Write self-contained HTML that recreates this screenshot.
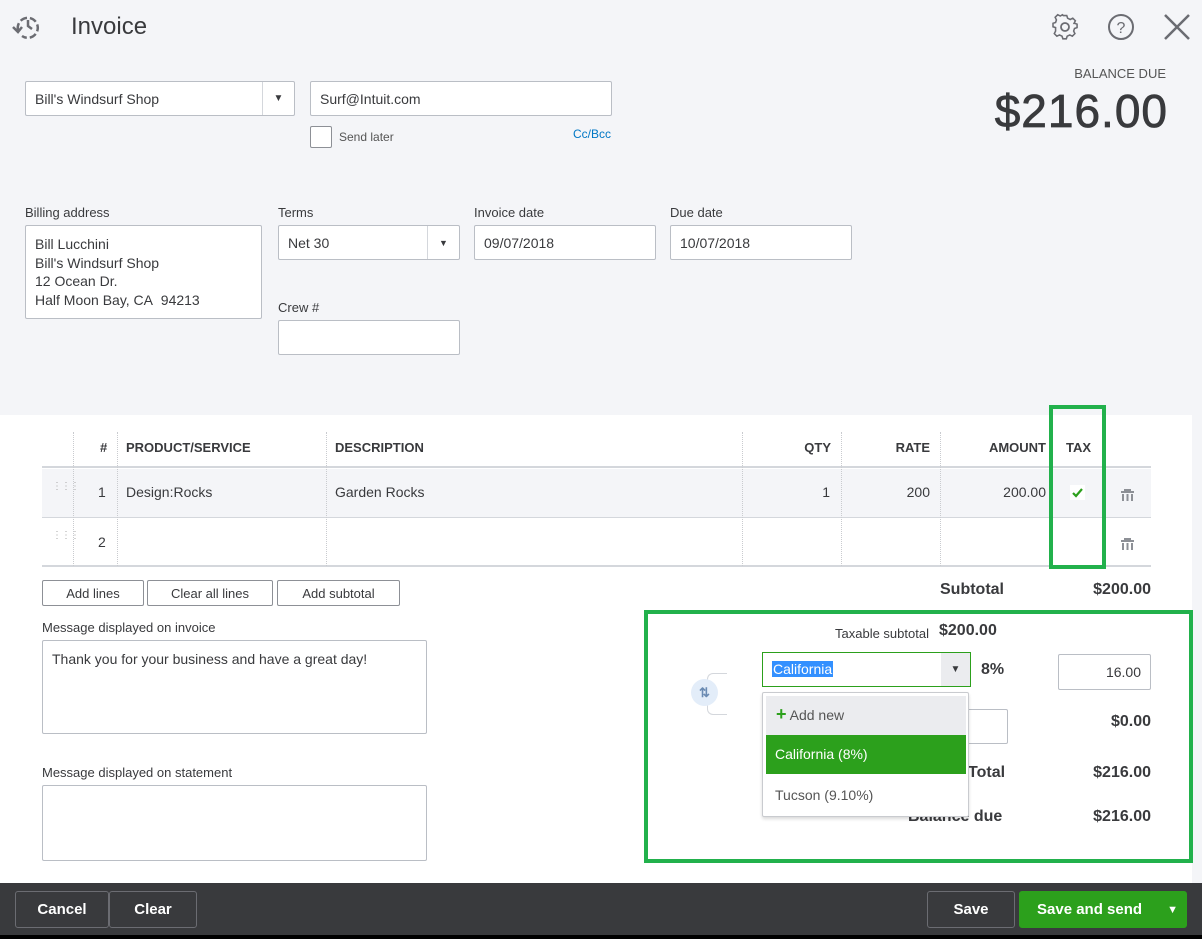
<!DOCTYPE html>
<html><head><meta charset="utf-8"><style>
*{box-sizing:border-box;margin:0;padding:0}
body{width:1202px;height:939px;background:#f4f5f8;font-family:"Liberation Sans",sans-serif;color:#393a3d;position:relative;overflow:hidden;font-size:14px}
.a{position:absolute}
.inp{position:absolute;background:#fff;border:1px solid #babec5;border-radius:2px;font-size:14px;padding-left:9px;display:flex;align-items:center}
.lbl{position:absolute;font-size:13px;color:#393a3d}
.dd{position:absolute;right:0;top:0;bottom:0;width:32px;border-left:1px solid #d4d7dc;display:flex;align-items:center;justify-content:center;font-size:10px}
.th{position:absolute;top:440px;font-size:13px;font-weight:bold;color:#393a3d}
.vl{position:absolute;width:0;border-left:1px dotted #c9cbcf}
.btn{position:absolute;border:1px solid #8d9096;border-radius:2px;background:#fff;font-size:13px;display:flex;align-items:center;justify-content:center}
.fb{position:absolute;top:891px;height:37px;border:1px solid #6b6c72;border-radius:3px;color:#fff;font-weight:bold;font-size:15px;display:flex;align-items:center;justify-content:center}
.r{text-align:right}
</style></head><body>
<svg class="a" style="left:11px;top:12px" width="32" height="28" viewBox="0 0 32 28"><path d="M7 18a10 10 0 1 1 4 6" fill="none" stroke="#6b6c72" stroke-width="2.5" stroke-dasharray="7 3"/><path d="M17 8v6l4 3" fill="none" stroke="#6b6c72" stroke-width="2.5"/><path d="M2 15l5 5 4-5" fill="none" stroke="#6b6c72" stroke-width="2.5"/></svg>
<div class="a" style="left:71px;top:13px;font-size:24px;color:#393a3d">Invoice</div>
<svg class="a" style="left:1051px;top:13px" width="28" height="28" viewBox="0 0 28 28"><circle cx="14" cy="14" r="4" fill="none" stroke="#6b6c72" stroke-width="1.8"/><path d="M12 3h4l1 3 3 1.5 3-1.5 3 3-1.5 3L25 12l3 1v4l-3 1-1 3 1.5 3-3 3-3-1.5-3 1.5-1 3h-4l-1-3-3-1.5-3 1.5-3-3 1.5-3L3 17l-3-1v-4l3-1 1-3L2.5 5 5.5 2 8.5 3.5 11 2z" transform="translate(2 0) scale(.86)" fill="none" stroke="#6b6c72" stroke-width="1.8"/></svg>
<svg class="a" style="left:1107px;top:13px" width="28" height="28" viewBox="0 0 28 28"><circle cx="14" cy="14" r="12" fill="none" stroke="#6b6c72" stroke-width="2"/><text x="14" y="20" text-anchor="middle" font-size="16" font-family="Liberation Sans" fill="#6b6c72">?</text></svg>
<svg class="a" style="left:1163px;top:13px" width="28" height="28" viewBox="0 0 28 28"><path d="M2 2l24 24M26 2L2 26" stroke="#6b6c72" stroke-width="2.5"/></svg>
<div class="a" style="right:36px;top:66px;font-size:13px;color:#555">BALANCE DUE</div>
<div class="a" style="right:34px;top:84px;font-size:46px;color:#393a3d;letter-spacing:1px;-webkit-text-stroke:0.8px #393a3d">$216.00</div>

<div class="inp" style="left:25px;top:81px;width:270px;height:35px">Bill's Windsurf Shop<div class="dd">▼</div></div>
<div class="inp" style="left:310px;top:81px;width:302px;height:35px">Surf@Intuit.com</div>
<div class="a" style="left:310px;top:126px;width:22px;height:22px;border:1px solid #8d9096;border-radius:2px;background:#fff"></div>
<div class="a" style="left:339px;top:130px;font-size:12px;color:#555">Send later</div>
<div class="a" style="left:573px;top:127px;font-size:12px;color:#0077c5">Cc/Bcc</div>

<div class="lbl" style="left:25px;top:205px">Billing address</div>
<div class="inp" style="left:25px;top:225px;width:237px;height:94px;align-items:flex-start;padding-top:9px;line-height:18.5px;font-size:14px">Bill Lucchini<br>Bill's Windsurf Shop<br>12 Ocean Dr.<br>Half Moon Bay, CA&nbsp; 94213</div>
<div class="lbl" style="left:278px;top:205px">Terms</div>
<div class="inp" style="left:278px;top:225px;width:182px;height:35px">Net 30<div class="dd" style="font-size:9px">▼</div></div>
<div class="lbl" style="left:474px;top:205px">Invoice date</div>
<div class="inp" style="left:474px;top:225px;width:182px;height:35px">09/07/2018</div>
<div class="lbl" style="left:670px;top:205px">Due date</div>
<div class="inp" style="left:670px;top:225px;width:182px;height:35px">10/07/2018</div>
<div class="lbl" style="left:278px;top:300px">Crew #</div>
<div class="inp" style="left:278px;top:320px;width:182px;height:35px"></div>

<div class="a" style="left:0;top:415px;width:1192px;height:468px;background:#fff"></div>
<div class="a" style="left:42px;top:469px;width:1109px;height:48px;background:#f4f5f8"></div>
<div class="a" style="left:42px;top:466px;width:1109px;height:2px;background:#d4d7dc"></div>
<div class="a" style="left:42px;top:517px;width:1109px;height:1px;background:#d4d7dc"></div>
<div class="a" style="left:42px;top:565px;width:1109px;height:2px;background:#d4d7dc"></div>
<div class="vl" style="left:73px;top:432px;height:134px"></div>
<div class="vl" style="left:117px;top:432px;height:134px"></div>
<div class="vl" style="left:326px;top:432px;height:134px"></div>
<div class="vl" style="left:742px;top:432px;height:134px"></div>
<div class="vl" style="left:841px;top:432px;height:134px"></div>
<div class="vl" style="left:940px;top:432px;height:134px"></div>
<div class="th" style="left:100px">#</div>
<div class="th" style="left:126px">PRODUCT/SERVICE</div>
<div class="th" style="left:335px">DESCRIPTION</div>
<div class="th" style="left:790px;width:41px;text-align:right">QTY</div>
<div class="th" style="left:880px;width:50px;text-align:right">RATE</div>
<div class="th" style="left:960px;width:86px;text-align:right">AMOUNT</div>
<div class="th" style="left:1066px">TAX</div>
<div class="a" style="left:52px;top:481px;font-size:10px;color:#aaa;letter-spacing:-1px">⋮⋮⋮</div>
<div class="a" style="left:52px;top:530px;font-size:10px;color:#aaa;letter-spacing:-1px">⋮⋮⋮</div>
<div class="a" style="left:98px;top:484px">1</div>
<div class="a" style="left:98px;top:534px">2</div>
<div class="a" style="left:126px;top:484px">Design:Rocks</div>
<div class="a" style="left:335px;top:484px">Garden Rocks</div>
<div class="a r" style="left:780px;top:484px;width:50px">1</div>
<div class="a r" style="left:870px;top:484px;width:60px">200</div>
<div class="a r" style="left:960px;top:484px;width:86px">200.00</div>
<svg class="a" style="left:1070px;top:485px" width="15" height="15" viewBox="0 0 15 15"><rect width="15" height="15" fill="#fff"/><path d="M3 8l3 3 6-7" fill="none" stroke="#2ca01c" stroke-width="2.2"/></svg>
<svg class="a" style="left:1121px;top:489px" width="13" height="13" viewBox="0 0 13 13"><rect x="0" y="2" width="13" height="2" fill="#8d9096"/><rect x="3" y="0" width="7" height="2" fill="#8d9096"/><rect x="1" y="5" width="2" height="7" fill="#8d9096"/><rect x="5.5" y="5" width="2" height="7" fill="#8d9096"/><rect x="10" y="5" width="2" height="7" fill="#8d9096"/></svg>
<svg class="a" style="left:1121px;top:538px" width="13" height="13" viewBox="0 0 13 13"><rect x="0" y="2" width="13" height="2" fill="#8d9096"/><rect x="3" y="0" width="7" height="2" fill="#8d9096"/><rect x="1" y="5" width="2" height="7" fill="#8d9096"/><rect x="5.5" y="5" width="2" height="7" fill="#8d9096"/><rect x="10" y="5" width="2" height="7" fill="#8d9096"/></svg>
<div class="a" style="left:1049px;top:405px;width:57px;height:164px;border:4px solid #22b14c"></div>

<div class="btn" style="left:42px;top:580px;width:102px;height:26px">Add lines</div>
<div class="btn" style="left:147px;top:580px;width:126px;height:26px">Clear all lines</div>
<div class="btn" style="left:277px;top:580px;width:123px;height:26px">Add subtotal</div>
<div class="a" style="left:940px;top:581px;font-size:16px;font-weight:bold">Subtotal</div>
<div class="a r" style="left:1050px;top:581px;width:101px;font-size:16px;font-weight:bold">$200.00</div>

<div class="lbl" style="left:42px;top:620px">Message displayed on invoice</div>
<div class="inp" style="left:42px;top:640px;width:385px;height:94px;align-items:flex-start;padding-top:10px">Thank you for your business and have a great day!</div>
<div class="lbl" style="left:42px;top:765px">Message displayed on statement</div>
<div class="inp" style="left:42px;top:785px;width:385px;height:76px"></div>

<div class="a" style="left:644px;top:610px;width:549px;height:253px;border:4px solid #22b14c"></div>
<div class="a" style="left:835px;top:626px;font-size:13px">Taxable subtotal</div>
<div class="a" style="left:939px;top:622px;font-size:16px;font-weight:bold">$200.00</div>
<div class="a" style="left:707px;top:673px;width:20px;height:42px;border:1px solid #d4d7dc;border-right:none;border-radius:6px 0 0 6px"></div>
<div class="a" style="left:691px;top:679px;width:27px;height:27px;border-radius:50%;background:#e3edf9;color:#6b8bb3;font-size:13px;font-weight:bold;text-align:center;line-height:27px">⇅</div>
<div class="a" style="left:762px;top:652px;width:209px;height:35px;border:1px solid #2ca01c;background:#fff"><span class="a" style="left:9px;top:8px;background:#3390ff;color:#fff;padding:0 1px">California</span><div class="a" style="right:0;top:0;width:29px;height:33px;background:#ebecef;font-size:10px;display:flex;align-items:center;justify-content:center">▼</div></div>
<div class="a" style="left:981px;top:661px;font-size:16px;font-weight:bold">8%</div>
<div class="inp" style="left:1058px;top:654px;width:93px;height:36px;justify-content:flex-end;padding-right:9px">16.00</div>
<div class="inp" style="left:960px;top:709px;width:48px;height:35px"></div>
<div class="a r" style="left:1050px;top:713px;width:101px;font-size:16px;font-weight:bold">$0.00</div>
<div class="a" style="left:968px;top:764px;font-size:16px;font-weight:bold">Total</div>
<div class="a r" style="left:1050px;top:764px;width:101px;font-size:16px;font-weight:bold">$216.00</div>
<div class="a" style="left:908px;top:808px;font-size:16px;font-weight:bold">Balance due</div>
<div class="a r" style="left:1050px;top:808px;width:101px;font-size:16px;font-weight:bold">$216.00</div>
<div class="a" style="left:762px;top:692px;width:207px;height:125px;background:#fff;border:1px solid #c9cbcf;border-radius:2px;box-shadow:0 2px 3px rgba(0,0,0,.15)">
<div class="a" style="left:3px;top:3px;width:200px;height:39px;background:#ebecef;font-size:14px;color:#555;padding:11px 0 0 10px"><span style="color:#2ca01c;font-weight:bold;font-size:18px;line-height:10px">+</span> Add new</div>
<div class="a" style="left:3px;top:42px;width:200px;height:39px;background:#2ca01c;color:#fff;padding:11px 0 0 9px">California (8%)</div>
<div class="a" style="left:12px;top:94px;color:#555">Tucson (9.10%)</div>
</div>

<div class="a" style="left:0;top:883px;width:1202px;height:52px;background:#393a3d"></div>
<div class="a" style="left:0;top:935px;width:1202px;height:4px;background:#000"></div>
<div class="fb" style="left:15px;width:94px">Cancel</div>
<div class="fb" style="left:109px;width:88px">Clear</div>
<div class="fb" style="left:927px;width:88px">Save</div>
<div class="fb" style="left:1019px;width:168px;background:#2ca01c;border-color:#2ca01c;justify-content:flex-start;padding-left:17px">Save and send<span class="a" style="right:8px;font-size:11px">▼</span></div>
</body></html>
